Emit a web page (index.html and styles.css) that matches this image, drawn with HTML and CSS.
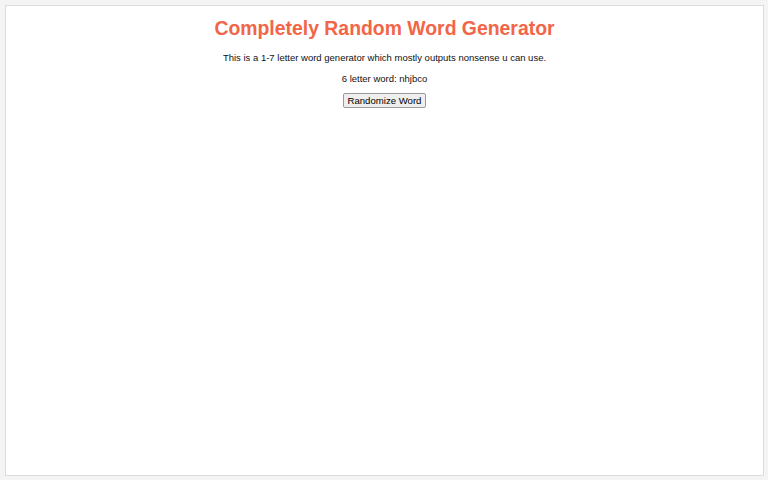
FILE: index.html
```html
<!DOCTYPE html>
<html>
<head>
<meta charset="utf-8">
<link rel="stylesheet" href="styles.css">
</head>
<body>
<div class="page">
  <h1 class="title">Completely Random Word Generator</h1>
  <p class="text">This is a 1-7 letter word generator which mostly outputs nonsense u can use.</p>
  <p class="text">6 letter word: nhjbco</p>
  <button class="btn">Randomize Word</button>
</div>
</body>
</html>
```
FILE: styles.css
```css
html, body {
  margin: 0;
  padding: 0;
  background: #f4f4f4;
  font-family: "Liberation Sans", Arial, sans-serif;
}
body {
  padding: 5px 4px 0 5px;
}
.page {
  background: #ffffff;
  border: 1px solid #dcdcdc;
  height: 471px;
  box-sizing: border-box;
  text-align: center;
  padding-top: 11px;
}
.title {
  color: #f26547;
  font-size: 19.4px;
  font-weight: bold;
  margin: 0 0 12px;
  line-height: 23px;
}
.text {
  font-size: 9.5px;
  color: #111;
  margin: 0 0 10px;
  line-height: 11px;
}
.btn {
  font-family: "Liberation Sans", Arial, sans-serif;
  font-size: 9.6px;
  line-height: 11px;
  height: 15px;
  padding: 0 4px;
  margin-top: -1px;
  background: #efefef;
  border: 1px solid #9a9a9a;
  border-radius: 2px;
  color: #000;
  vertical-align: top;
}
```
